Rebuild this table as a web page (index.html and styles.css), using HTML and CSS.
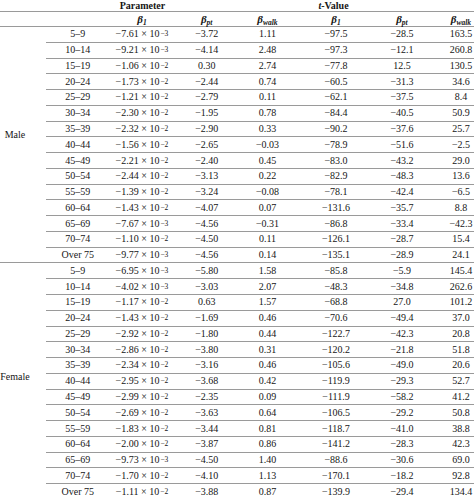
FILE: index.html
```html
<!DOCTYPE html>
<html lang="en">
<head>
<meta charset="utf-8">
<title>Parameter and t-Value table</title>
<link rel="stylesheet" href="styles.css">
</head>
<body>
<div class="table">
  <div class="c"></div>
  <div class="c head-top span3"><b>Parameter</b></div>
  <div class="c head-top span3"><b><i>t</i>-Value</b></div>
  <div class="c"></div>

  <div class="c"></div>
  <div class="c"></div>
  <div class="c head"><span class="beta">β<sub>1</sub></span></div>
  <div class="c head"><span class="beta">β<sub>pt</sub></span></div>
  <div class="c head"><span class="beta">β<sub>walk</sub></span></div>
  <div class="c head"><span class="beta">β<sub>1</sub></span></div>
  <div class="c head"><span class="beta">β<sub>pt</sub></span></div>
  <div class="c head"><span class="beta">β<sub>walk</sub></span></div>

  <div class="c group male">Male</div>
  <div class="c">5–9</div><div class="c">−7.61 × 10<sup>−3</sup></div><div class="c">−3.72</div><div class="c">1.11</div><div class="c">−97.5</div><div class="c">−28.5</div><div class="c">163.5</div>
  <div class="c">10–14</div><div class="c">−9.21 × 10<sup>−3</sup></div><div class="c">−4.14</div><div class="c">2.48</div><div class="c">−97.3</div><div class="c">−12.1</div><div class="c">260.8</div>
  <div class="c">15–19</div><div class="c">−1.06 × 10<sup>−2</sup></div><div class="c">0.30</div><div class="c">2.74</div><div class="c">−77.8</div><div class="c">12.5</div><div class="c">130.5</div>
  <div class="c">20–24</div><div class="c">−1.73 × 10<sup>−2</sup></div><div class="c">−2.44</div><div class="c">0.74</div><div class="c">−60.5</div><div class="c">−31.3</div><div class="c">34.6</div>
  <div class="c">25–29</div><div class="c">−1.21 × 10<sup>−2</sup></div><div class="c">−2.79</div><div class="c">0.11</div><div class="c">−62.1</div><div class="c">−37.5</div><div class="c">8.4</div>
  <div class="c">30–34</div><div class="c">−2.30 × 10<sup>−2</sup></div><div class="c">−1.95</div><div class="c">0.78</div><div class="c">−84.4</div><div class="c">−40.5</div><div class="c">50.9</div>
  <div class="c">35–39</div><div class="c">−2.32 × 10<sup>−2</sup></div><div class="c">−2.90</div><div class="c">0.33</div><div class="c">−90.2</div><div class="c">−37.6</div><div class="c">25.7</div>
  <div class="c">40–44</div><div class="c">−1.56 × 10<sup>−2</sup></div><div class="c">−2.65</div><div class="c">−0.03</div><div class="c">−78.9</div><div class="c">−51.6</div><div class="c">−2.5</div>
  <div class="c">45–49</div><div class="c">−2.21 × 10<sup>−2</sup></div><div class="c">−2.40</div><div class="c">0.45</div><div class="c">−83.0</div><div class="c">−43.2</div><div class="c">29.0</div>
  <div class="c">50–54</div><div class="c">−2.44 × 10<sup>−2</sup></div><div class="c">−3.13</div><div class="c">0.22</div><div class="c">−82.9</div><div class="c">−48.3</div><div class="c">13.6</div>
  <div class="c">55–59</div><div class="c">−1.39 × 10<sup>−2</sup></div><div class="c">−3.24</div><div class="c">−0.08</div><div class="c">−78.1</div><div class="c">−42.4</div><div class="c">−6.5</div>
  <div class="c">60–64</div><div class="c">−1.43 × 10<sup>−2</sup></div><div class="c">−4.07</div><div class="c">0.07</div><div class="c">−131.6</div><div class="c">−35.7</div><div class="c">8.8</div>
  <div class="c">65–69</div><div class="c">−7.67 × 10<sup>−3</sup></div><div class="c">−4.56</div><div class="c">−0.31</div><div class="c">−86.8</div><div class="c">−33.4</div><div class="c">−42.3</div>
  <div class="c">70–74</div><div class="c">−1.10 × 10<sup>−2</sup></div><div class="c">−4.50</div><div class="c">0.11</div><div class="c">−126.1</div><div class="c">−28.7</div><div class="c">15.4</div>
  <div class="c">Over 75</div><div class="c">−9.77 × 10<sup>−3</sup></div><div class="c">−4.56</div><div class="c">0.14</div><div class="c">−135.1</div><div class="c">−28.9</div><div class="c">24.1</div>

  <div class="c group female">Female</div>
  <div class="c">5–9</div><div class="c">−6.95 × 10<sup>−3</sup></div><div class="c">−5.80</div><div class="c">1.58</div><div class="c">−85.8</div><div class="c">−5.9</div><div class="c">145.4</div>
  <div class="c">10–14</div><div class="c">−4.02 × 10<sup>−3</sup></div><div class="c">−3.03</div><div class="c">2.07</div><div class="c">−48.3</div><div class="c">−34.8</div><div class="c">262.6</div>
  <div class="c">15–19</div><div class="c">−1.17 × 10<sup>−2</sup></div><div class="c">0.63</div><div class="c">1.57</div><div class="c">−68.8</div><div class="c">27.0</div><div class="c">101.2</div>
  <div class="c">20–24</div><div class="c">−1.43 × 10<sup>−2</sup></div><div class="c">−1.69</div><div class="c">0.46</div><div class="c">−70.6</div><div class="c">−49.4</div><div class="c">37.0</div>
  <div class="c">25–29</div><div class="c">−2.92 × 10<sup>−2</sup></div><div class="c">−1.80</div><div class="c">0.44</div><div class="c">−122.7</div><div class="c">−42.3</div><div class="c">20.8</div>
  <div class="c">30–34</div><div class="c">−2.86 × 10<sup>−2</sup></div><div class="c">−3.80</div><div class="c">0.31</div><div class="c">−120.2</div><div class="c">−21.8</div><div class="c">51.8</div>
  <div class="c">35–39</div><div class="c">−2.34 × 10<sup>−2</sup></div><div class="c">−3.16</div><div class="c">0.46</div><div class="c">−105.6</div><div class="c">−49.0</div><div class="c">20.6</div>
  <div class="c">40–44</div><div class="c">−2.95 × 10<sup>−2</sup></div><div class="c">−3.68</div><div class="c">0.42</div><div class="c">−119.9</div><div class="c">−29.3</div><div class="c">52.7</div>
  <div class="c">45–49</div><div class="c">−2.99 × 10<sup>−2</sup></div><div class="c">−2.35</div><div class="c">0.09</div><div class="c">−111.9</div><div class="c">−58.2</div><div class="c">41.2</div>
  <div class="c">50–54</div><div class="c">−2.69 × 10<sup>−2</sup></div><div class="c">−3.63</div><div class="c">0.64</div><div class="c">−106.5</div><div class="c">−29.2</div><div class="c">50.8</div>
  <div class="c">55–59</div><div class="c">−1.83 × 10<sup>−2</sup></div><div class="c">−3.44</div><div class="c">0.81</div><div class="c">−118.7</div><div class="c">−41.0</div><div class="c">38.8</div>
  <div class="c">60–64</div><div class="c">−2.00 × 10<sup>−2</sup></div><div class="c">−3.87</div><div class="c">0.86</div><div class="c">−141.2</div><div class="c">−28.3</div><div class="c">42.3</div>
  <div class="c">65–69</div><div class="c">−9.73 × 10<sup>−3</sup></div><div class="c">−4.50</div><div class="c">1.40</div><div class="c">−88.6</div><div class="c">−30.6</div><div class="c">69.0</div>
  <div class="c">70–74</div><div class="c">−1.70 × 10<sup>−2</sup></div><div class="c">−4.10</div><div class="c">1.13</div><div class="c">−170.1</div><div class="c">−18.2</div><div class="c">92.8</div>
  <div class="c">Over 75</div><div class="c">−1.11 × 10<sup>−2</sup></div><div class="c">−3.88</div><div class="c">0.87</div><div class="c">−139.9</div><div class="c">−29.4</div><div class="c">134.4</div>
</div>
</body>
</html>
```

FILE: styles.css
```css
html, body {
  margin: 0;
  padding: 0;
  background: #ffffff;
  overflow: hidden;
}

body {
  width: 474px;
  height: 499px;
  font-family: "Liberation Serif", "DejaVu Serif", serif;
  font-size: 10px;
  color: #161616;
}

.table {
  display: grid;
  grid-template-columns: 46px 63.5px 65px 64.4px 57.2px 79.8px 52.2px 65.8px;
  grid-template-rows: 12px 15px repeat(30, 15.77px);
  width: 493.9px;
}

.c {
  box-sizing: border-box;
  display: flex;
  align-items: center;
  justify-content: center;
  border-bottom: 1px solid #9a9a9a;
  white-space: nowrap;
  line-height: 1;
}

.span3 {
  grid-column: span 3;
}

.head-top {
  line-height: 11px;
}

.head {
  padding-top: 1px;
}

.beta {
  font-weight: bold;
  font-style: italic;
  font-size: 11px;
}

.beta sub {
  font-size: 7.5px;
  vertical-align: -2px;
  line-height: 0;
}

sup {
  font-size: 7.5px;
  vertical-align: 4px;
  line-height: 0;
  margin-left: 1px;
}

.group {
  grid-row: span 15;
  padding-right: 16px;
}

.male {
  padding-bottom: 20px;
}

.female {
  padding-bottom: 9px;
}
```
